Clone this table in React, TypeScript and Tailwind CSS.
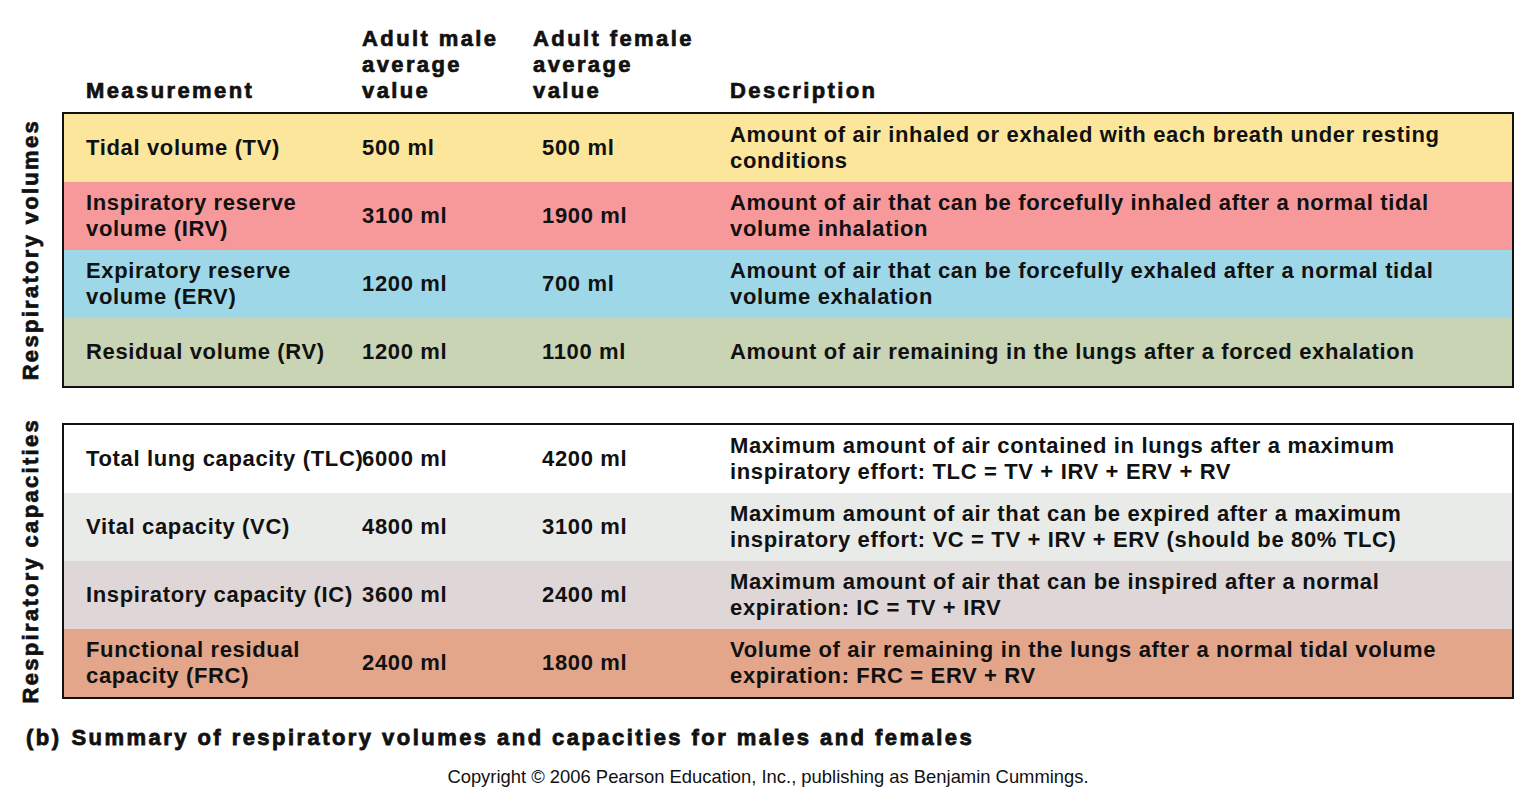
import React from "react";

type Row = {
  name: React.ReactNode;
  male: string;
  female: string;
  desc: React.ReactNode;
  bg: string;
};

const volumes: Row[] = [
  {
    name: "Tidal volume (TV)",
    male: "500 ml",
    female: "500 ml",
    desc: (
      <>
        Amount of air inhaled or exhaled with each breath under resting
        <br />
        conditions
      </>
    ),
    bg: "bg-[#fbe69b]",
  },
  {
    name: (
      <>
        Inspiratory reserve
        <br />
        volume (IRV)
      </>
    ),
    male: "3100 ml",
    female: "1900 ml",
    desc: (
      <>
        Amount of air that can be forcefully inhaled after a normal tidal
        <br />
        volume inhalation
      </>
    ),
    bg: "bg-[#f7999b]",
  },
  {
    name: (
      <>
        Expiratory reserve
        <br />
        volume (ERV)
      </>
    ),
    male: "1200 ml",
    female: "700 ml",
    desc: (
      <>
        Amount of air that can be forcefully exhaled after a normal tidal
        <br />
        volume exhalation
      </>
    ),
    bg: "bg-[#9ed8e8]",
  },
  {
    name: "Residual volume (RV)",
    male: "1200 ml",
    female: "1100 ml",
    desc: "Amount of air remaining in the lungs after a forced exhalation",
    bg: "bg-[#c9d4b4]",
  },
];

const capacities: Row[] = [
  {
    name: "Total lung capacity (TLC)",
    male: "6000 ml",
    female: "4200 ml",
    desc: (
      <>
        Maximum amount of air contained in lungs after a maximum
        <br />
        inspiratory effort: TLC = TV + IRV + ERV + RV
      </>
    ),
    bg: "bg-white",
  },
  {
    name: "Vital capacity (VC)",
    male: "4800 ml",
    female: "3100 ml",
    desc: (
      <>
        Maximum amount of air that can be expired after a maximum
        <br />
        inspiratory effort: VC = TV + IRV + ERV (should be 80% TLC)
      </>
    ),
    bg: "bg-[#e8ebe8]",
  },
  {
    name: "Inspiratory capacity (IC)",
    male: "3600 ml",
    female: "2400 ml",
    desc: (
      <>
        Maximum amount of air that can be inspired after a normal
        <br />
        expiration: IC = TV + IRV
      </>
    ),
    bg: "bg-[#dfd7d7]",
  },
  {
    name: (
      <>
        Functional residual
        <br />
        capacity (FRC)
      </>
    ),
    male: "2400 ml",
    female: "1800 ml",
    desc: (
      <>
        Volume of air remaining in the lungs after a normal tidal volume
        <br />
        expiration: FRC = ERV + RV
      </>
    ),
    bg: "bg-[#e3a68a]",
  },
];

// heavy "black" weight is faked with a thin text stroke
const Section = ({ label, rows }: { label: string; rows: Row[] }) => {
  return (
    <div className="flex h-[276px]">
      <div className="w-[62px] h-[276px] flex items-center justify-center">
        <span className="[writing-mode:vertical-rl] rotate-180 text-[22px] font-bold tracking-[2.3px] [-webkit-text-stroke:0.7px_#111] leading-none whitespace-nowrap">
          {label}
        </span>
      </div>
      <div className="w-[1452px] h-[276px] border-2 border-[#111] flex flex-col">
        {rows.map((r, i) => (
          <div
            key={i}
            className={`flex-1 grid grid-cols-[298px_180px_188px_1fr] items-center text-[22px] font-bold leading-[26px] tracking-[0.65px] whitespace-nowrap ${r.bg}`}
          >
            <div className="pl-[22px]">{r.name}</div>
            <div>{r.male}</div>
            <div>{r.female}</div>
            <div>{r.desc}</div>
          </div>
        ))}
      </div>
    </div>
  );
};

const App = () => {
  return (
    <div className="w-[1536px] h-[810px] bg-white text-[#111] font-['Liberation_Sans',Arial,sans-serif] flex flex-col">
      {/* column headings */}
      <div className="h-[112px] shrink-0 pl-[64px] pb-[8px] grid grid-cols-[298px_171px_197px_1fr] items-end text-[22px] font-bold leading-[26px] tracking-[2.4px] [-webkit-text-stroke:0.7px_#111]">
        <div className="pl-[22px]">Measurement</div>
        <div>
          Adult male
          <br />
          average
          <br />
          value
        </div>
        <div>
          Adult female
          <br />
          average
          <br />
          value
        </div>
        <div>Description</div>
      </div>

      <Section label="Respiratory volumes" rows={volumes} />
      <div className="h-[35px] shrink-0" />
      <Section label="Respiratory capacities" rows={capacities} />

      <div className="mt-[26px] pl-[26px] text-[22px] font-bold tracking-[2.45px] [-webkit-text-stroke:0.8px_#111] leading-[26px] flex gap-[10px]">
        <span>(b)</span>
        <span>Summary of respiratory volumes and capacities for males and females</span>
      </div>
      <div className="mt-[16px] text-center text-[18.4px] leading-[20px]">
        Copyright © 2006 Pearson Education, Inc., publishing as Benjamin Cummings.
      </div>
    </div>
  );
};

export default App;
